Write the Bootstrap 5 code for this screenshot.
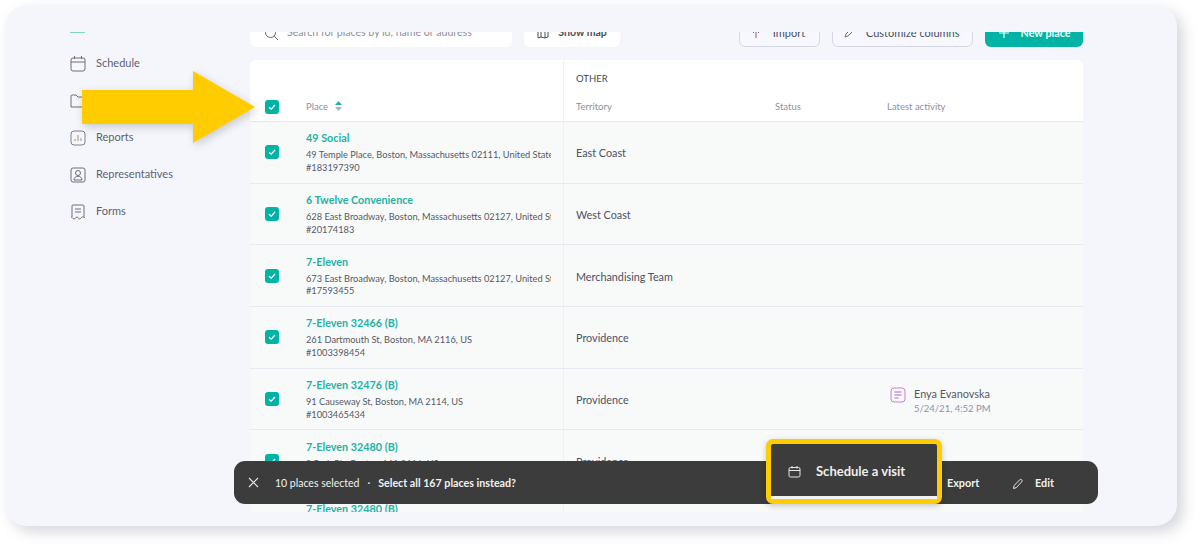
<!DOCTYPE html>
<html lang="en">
<head>
<meta charset="utf-8">
<title>Places</title>
<link rel="stylesheet" href="https://cdn.jsdelivr.net/npm/bootstrap@5.3.0/dist/css/bootstrap.min.css">
<style>
html,body{height:551px;overflow:hidden;background:#fff;}
body{font-family:Lato,"Liberation Sans",sans-serif;color:#4a4e5c;}
.stage{padding:5px 25px 25px 5px;height:551px;}
.panel-shell{position:relative;height:521px;width:1172px;background:#f5f6fc;border-radius:22px;box-shadow:6px 6px 14px rgba(70,75,95,.22);padding-top:27px;}
.clip-area{height:480px;overflow:hidden;}
.side-col{width:245px;flex:none;padding-left:65px;margin-top:-5px;}
.active-tick{width:15px;height:1px;background:#7fd3c9;margin-top:5px;margin-bottom:-1px;}
.side-item{height:37px;font-size:11px;color:#5d6170;gap:10px;}
.side-item svg{width:16px;height:18px;flex:none;}
.side-list{margin-top:13px;}
.main-col{width:833px;flex:none;}
.tools{margin-top:-17px;height:32px;margin-bottom:13px;gap:0;}
.search-box{width:262px;background:#fff;border-radius:6px;height:32px;font-size:10.6px;color:#8b8f9c;gap:8px;padding-left:14px;padding-top:4px;}
.map-btn{width:97px;margin-left:12px;background:#fff;border-radius:6px;height:32px;font-size:10.5px;font-weight:700;color:#4a4e5c;gap:9px;justify-content:center;padding-top:4px;}
.tool-btn{height:32px;border:1px solid #d6d8e6;border-radius:6px;background:#f7f8fd;font-size:11px;color:#4a4e5c;gap:11px;justify-content:center;padding-top:4px;}
.btn-import{width:81px;margin-left:119px;padding-right:5px;}
.btn-cols{width:141px;margin-left:12px;padding-right:3px;}
.btn-new{width:98px;margin-left:12px;height:32px;border-radius:6px;background:#00b3a4;color:#e9fbf8;font-size:10.8px;font-weight:700;gap:11px;justify-content:center;padding-top:4px;}
.sheet{background:#fff;border-radius:6px 6px 0 0;}
.sheet-head{height:62px;border-bottom:1px solid #e8eaf2;}
.cell-check{width:56px;flex:none;padding-left:15px;}
.cell-place{width:257px;flex:none;white-space:nowrap;}
.row-place .cell-place{padding-top:1px;}
.cell-terr{width:212px;flex:none;padding-left:12px;font-size:10.8px;color:#4c5166;padding-top:2px;}
.cell-status{width:112px;flex:none;}
.cell-act{flex:1;}
.head-label{font-size:9.5px;color:#8d909c;}
.group-title{font-size:9.5px;color:#454955;letter-spacing:0;}
.head-terr{border-left:1px solid #eef0f6;padding-left:12px;width:212px;flex:none;height:100%;padding-top:12px;}
.head-gap{margin-top:14px;}
.head-low{padding-top:40px;}
.head-place{gap:6px;}
.sort-mark{margin-top:1px;}
.row-place{height:61.7px;background:#f8f9f9;border-bottom:1px solid #e8eaf2;}
.row-place:last-child{border-bottom:0;}
.cell-terr-line{border-left:1px solid #eef0f6;height:100%;}
.tick-box{width:14px;height:14px;border-radius:3px;background:#00b3a4;}
.tick-box svg{width:10px;height:10px;}
.place-name{font-size:10.8px;font-weight:700;color:#1fb3a5;line-height:14px;margin-bottom:4px;}
.place-addr{font-size:9.25px;color:#555966;line-height:12.5px;width:245px;overflow:hidden;}
.who{font-size:10.9px;color:#555966;line-height:14px;}
.when{font-size:9.5px;color:#8a94a8;line-height:15px;}
.activity{gap:8px;padding-left:3px;padding-top:4px;}
.activity svg{width:16px;height:16px;margin-top:-13px;}
.action-bar{position:absolute;left:229px;top:456px;width:864px;height:43px;background:#3c3c3c;border-radius:11px;color:#f1f1f1;font-size:10.5px;}
.x-mark{position:absolute;left:14px;top:16px;width:11px;height:11px;}
.bar-text{position:absolute;left:41px;top:1px;height:43px;}
.bar-text strong{font-size:10.7px;}
.bar-link{position:absolute;top:1px;height:43px;font-weight:700;font-size:10.8px;gap:11px;}
.focus-frame{position:absolute;left:761px;top:434px;width:176px;height:65px;border:5px solid #ffcc00;border-radius:7px;background:#3c3c3c;box-shadow:0 2px 6px rgba(0,0,0,.2);color:#eee;font-size:13px;font-weight:700;gap:15px;padding-left:17px;padding-bottom:0;}
.focus-frame::after{content:"";position:absolute;left:0;right:0;bottom:0;height:3px;background:#f1f1f1;}
.big-arrow{position:absolute;left:72px;top:61px;width:180px;height:78px;filter:drop-shadow(2px 3px 4px rgba(0,0,0,.18));}
</style>
</head>
<body>
<div class="stage">
<div class="panel-shell">
<div class="clip-area d-flex">
  <nav class="side-col">
    <div class="active-tick"></div>
    <div class="side-list">
      <div class="side-item d-flex align-items-center"><svg viewBox="0 0 16 18" fill="none" stroke="#6b6f7c"><rect x="1" y="3" width="14" height="13" rx="2"/><path d="M1 7h14M4.500 1v3M11.500 1v3"/></svg>Schedule</div>
      <div class="side-item d-flex align-items-center"><svg viewBox="0 0 16 18" fill="none" stroke="#6b6f7c"><path d="M1 15V4a1 1 0 0 1 1-1h4l2 2h6a1 1 0 0 1 1 1v9z"/></svg>Places</div>
      <div class="side-item d-flex align-items-center"><svg viewBox="0 0 16 18" fill="none" stroke="#7d818e"><rect x="1" y="2" width="14" height="14" rx="3"/><path d="M5 12v-2M8 12V6M11 12V9" stroke="#a98f78"/></svg>Reports</div>
      <div class="side-item d-flex align-items-center"><svg viewBox="0 0 16 18" fill="none" stroke="#6b6f7c"><rect x="1" y="2" width="14" height="14" rx="2"/><circle cx="8" cy="7" r="2.500"/><path d="M4 14c0-5 8-5 8 0z"/></svg>Representatives</div>
      <div class="side-item d-flex align-items-center"><svg viewBox="0 0 16 18" fill="none" stroke="#6b6f7c"><path d="M2 14V3a1 1 0 0 1 1-1h10a1 1 0 0 1 1 1v11M1 14c1.500 0 1.500 2 3 2s1.500-2 3-2 1 2 2.500 2 1.500-2 3-2 1.500 1 2.500 0"/><path d="M5 6h6M5 9h6"/></svg>Forms</div>
    </div>
  </nav>
  <main class="main-col">
    <div class="tools d-flex">
      <div class="search-box d-flex align-items-center"><svg width="15" height="15" viewBox="0 0 15 15" fill="none" stroke="#62666f"><circle cx="6.500" cy="6.500" r="5"/><path d="M10.200 10.200L14 14"/></svg>Search for places by id, name or address</div>
      <div class="map-btn d-flex align-items-center"><svg width="12" height="12" viewBox="0 0 12 12" fill="none" stroke="#4a4e5c"><path d="M1 2l3-1 4 1 3-1v9l-3 1-4-1-3 1zM4 1v9M8 2v9"/></svg>Show map</div>
      <div class="tool-btn btn-import d-flex align-items-center"><svg width="12" height="12" viewBox="0 0 12 12" fill="none" stroke="#8a5a78"><path d="M6 11V3M3 6l3-3 3 3"/></svg>Import</div>
      <div class="tool-btn btn-cols d-flex align-items-center"><svg width="12" height="12" viewBox="0 0 12 12" fill="none" stroke="#6b6f7c"><path d="M2 10l1-3 5-5 2 2-5 5z"/></svg>Customize columns</div>
      <div class="btn-new d-flex align-items-center"><svg width="12" height="12" viewBox="0 0 12 12" fill="none" stroke="#e9fbf8" stroke-width="1.200"><path d="M6 1v10M1 6h10"/></svg>New place</div>
    </div>
    <section class="sheet">
      <div class="sheet-head d-flex">
        <div class="cell-check head-low"><div class="tick-box d-flex align-items-center justify-content-center"><svg viewBox="0 0 10 10" fill="none" stroke="#fff" stroke-width="1.300"><path d="M2 5.200l2.200 2L8 3"/></svg></div></div>
        <div class="cell-place head-low head-label head-place d-flex align-items-start">Place <svg class="sort-mark" width="9" height="10" viewBox="0 0 9 10"><path d="M4.500 0L8 4H1z" fill="#1fb3a5"/><path d="M4.500 10L8 6H1z" fill="#a9aed6"/></svg></div>
        <div class="head-terr">
          <div class="group-title">OTHER</div>
          <div class="head-label head-gap">Territory</div>
        </div>
        <div class="cell-status head-label head-low">Status</div>
        <div class="cell-act head-label head-low">Latest activity</div>
      </div>
      <div class="row-place d-flex align-items-center">
        <div class="cell-check"><div class="tick-box d-flex align-items-center justify-content-center"><svg viewBox="0 0 10 10" fill="none" stroke="#fff" stroke-width="1.300"><path d="M2 5.200l2.200 2L8 3"/></svg></div></div>
        <div class="cell-place"><div class="place-name">49 Social</div><div class="place-addr">49 Temple Place, Boston, Massachusetts 02111, United States</div><div class="place-addr">#183197390</div></div>
        <div class="cell-terr cell-terr-line d-flex align-items-center">East Coast</div>
      </div>
      <div class="row-place d-flex align-items-center">
        <div class="cell-check"><div class="tick-box d-flex align-items-center justify-content-center"><svg viewBox="0 0 10 10" fill="none" stroke="#fff" stroke-width="1.300"><path d="M2 5.200l2.200 2L8 3"/></svg></div></div>
        <div class="cell-place"><div class="place-name">6 Twelve Convenience</div><div class="place-addr">628 East Broadway, Boston, Massachusetts 02127, United States</div><div class="place-addr">#20174183</div></div>
        <div class="cell-terr cell-terr-line d-flex align-items-center">West Coast</div>
      </div>
      <div class="row-place d-flex align-items-center">
        <div class="cell-check"><div class="tick-box d-flex align-items-center justify-content-center"><svg viewBox="0 0 10 10" fill="none" stroke="#fff" stroke-width="1.300"><path d="M2 5.200l2.200 2L8 3"/></svg></div></div>
        <div class="cell-place"><div class="place-name">7-Eleven</div><div class="place-addr">673 East Broadway, Boston, Massachusetts 02127, United States</div><div class="place-addr">#17593455</div></div>
        <div class="cell-terr cell-terr-line d-flex align-items-center">Merchandising Team</div>
      </div>
      <div class="row-place d-flex align-items-center">
        <div class="cell-check"><div class="tick-box d-flex align-items-center justify-content-center"><svg viewBox="0 0 10 10" fill="none" stroke="#fff" stroke-width="1.300"><path d="M2 5.200l2.200 2L8 3"/></svg></div></div>
        <div class="cell-place"><div class="place-name">7-Eleven 32466 (B)</div><div class="place-addr">261 Dartmouth St, Boston, MA 2116, US</div><div class="place-addr">#1003398454</div></div>
        <div class="cell-terr cell-terr-line d-flex align-items-center">Providence</div>
      </div>
      <div class="row-place d-flex align-items-center">
        <div class="cell-check"><div class="tick-box d-flex align-items-center justify-content-center"><svg viewBox="0 0 10 10" fill="none" stroke="#fff" stroke-width="1.300"><path d="M2 5.200l2.200 2L8 3"/></svg></div></div>
        <div class="cell-place"><div class="place-name">7-Eleven 32476 (B)</div><div class="place-addr">91 Causeway St, Boston, MA 2114, US</div><div class="place-addr">#1003465434</div></div>
        <div class="cell-terr cell-terr-line d-flex align-items-center">Providence</div>
        <div class="cell-status"></div>
        <div class="cell-act activity d-flex align-items-center"><svg viewBox="0 0 16 16" fill="none" stroke="#c77fe0"><rect x="1" y="1" width="14" height="14" rx="3"/><path d="M4.500 5h7M4.500 8h7M4.500 11h4" stroke="#a06cc8"/></svg><div><div class="who">Enya Evanovska</div><div class="when">5/24/21, 4:52 PM</div></div></div>
      </div>
      <div class="row-place d-flex align-items-center">
        <div class="cell-check"><div class="tick-box d-flex align-items-center justify-content-center"><svg viewBox="0 0 10 10" fill="none" stroke="#fff" stroke-width="1.300"><path d="M2 5.200l2.200 2L8 3"/></svg></div></div>
        <div class="cell-place"><div class="place-name">7-Eleven 32480 (B)</div><div class="place-addr">9 Park Plz, Boston, MA 2116, US</div><div class="place-addr">#1003465440</div></div>
        <div class="cell-terr cell-terr-line d-flex align-items-center">Providence</div>
      </div>
      <div class="row-place d-flex align-items-center">
        <div class="cell-check"></div>
        <div class="cell-place"><div class="place-name">7-Eleven 32480 (B)</div><div class="place-addr">9 Park Plz, Boston, MA 2116, US</div><div class="place-addr">#1003465440</div></div>
        <div class="cell-terr cell-terr-line d-flex align-items-center">Providence</div>
      </div>
    </section>
  </main>
</div>
<div class="action-bar">
  <svg class="x-mark" viewBox="0 0 11 11" fill="none" stroke="#e6e6e6" stroke-width="1.100"><path d="M1 1l9 9M10 1l-9 9"/></svg>
  <div class="bar-text d-flex align-items-center"><span>10 places selected</span><span class="mx-2">·</span><strong>Select all 167 places instead?</strong></div>
  <div class="bar-link d-flex align-items-center" style="left:713px">Export</div>
  <div class="bar-link d-flex align-items-center" style="left:778px"><svg width="12" height="12" viewBox="0 0 12 12" fill="none" stroke="#e6e6e6"><path d="M1.500 10.500l.7-3 5.500-5.700a1.200 1.200 0 0 1 2 2L4.300 9.700z"/></svg><span>Edit</span></div>
</div>
<div class="focus-frame d-flex align-items-center"><svg width="13" height="13" viewBox="0 0 13 13" fill="none" stroke="#e6e6e6"><rect x="1" y="2.500" width="11" height="9.500" rx="1.500"/><path d="M1 5.500h11M4 1v2.500M9 1v2.500"/></svg>Schedule a visit</div>
<svg class="big-arrow" viewBox="0 0 180 78" aria-hidden="true"><path d="M5 24h111V5l62 36-62 36V58H5z" fill="#ffcc00"/></svg>
</div>
</div>
<script src="https://cdn.jsdelivr.net/npm/bootstrap@5.3.0/dist/js/bootstrap.bundle.min.js"></script>
</body>
</html>
